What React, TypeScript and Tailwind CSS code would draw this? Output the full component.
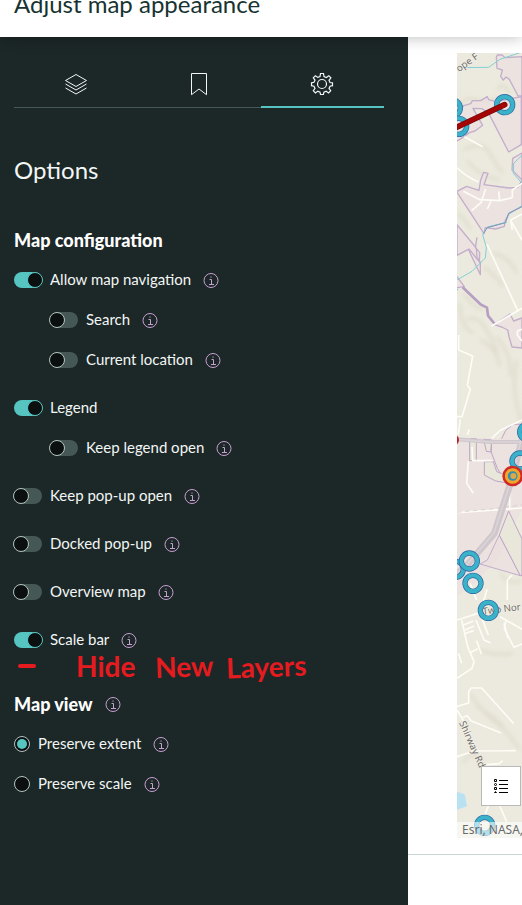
import { useState } from "react";
import type { ReactNode } from "react";

const switches = [
  { id: "navigation", label: "Allow map navigation", on: true, info: true, nested: false },
  { id: "search", label: "Search", on: false, info: true, nested: true },
  { id: "location", label: "Current location", on: false, info: true, nested: true },
  { id: "legend", label: "Legend", on: true, info: false, nested: false },
  { id: "legend-open", label: "Keep legend open", on: false, info: true, nested: true },
  { id: "popup-open", label: "Keep pop-up open", on: false, info: true, nested: false },
  { id: "popup-docked", label: "Docked pop-up", on: false, info: true, nested: false },
  { id: "overview", label: "Overview map", on: false, info: true, nested: false },
  { id: "scale-bar", label: "Scale bar", on: true, info: true, nested: false },
];

const views = [
  { id: "extent", label: "Preserve extent" },
  { id: "scale", label: "Preserve scale" },
];

// Blue rings on the map, in map units (three per pixel)
const points = [
  [157, 324],
  [176, 379],
  [314, 314],
  [383, 1296],
  [360, 1383],
  [166, 1708],
  [208, 1683],
  [219, 1750],
  [265, 1831],
  [254, 2476],
];

function LayersIcon() {
  return (
    <svg width="24" height="24" viewBox="0 0 24 24" fill="none" stroke="currentColor">
      <path d="M12 2.500 22.500 8.500 12 14.500 1.500 8.500z" />
      <path d="m1.500 12 10.500 6 10.500-6M1.500 16 12 22l10.500-6" />
    </svg>
  );
}

function BookmarkIcon() {
  return (
    <svg width="24" height="24" viewBox="0 0 24 24" fill="none" stroke="currentColor">
      <path d="M4.500 1.500h15v21.200L12 17l-7.500 5.700z" />
    </svg>
  );
}

function GearIcon() {
  return (
    <svg width="24" height="24" viewBox="0 0 24 24" fill="none" stroke="currentColor" strokeWidth="1.2">
      <circle cx="12" cy="12" r="4.500" />
      <path d="M10.500 1.500h3l.5 3 2.300 1 2.500-1.800 2.100 2.100L19 8.300l1 2.200 2.500.3v2.900l-2.500.5-1 2.200 1.700 2.300-2.100 2.200-2.500-1.700-2.200 1-.5 2.300h-2.900l-.5-2.300-2.200-1-2.400 1.700-2.100-2.200L5 16.400l-1-2.200-2.500-.5v-2.900l2.500-.5L5 8.100 3.300 5.800l2.100-2.100 2.400 1.700 2.200-.9z" />
    </svg>
  );
}

const tabs = [
  { label: "Layers", icon: LayersIcon },
  { label: "Bookmarks", icon: BookmarkIcon },
  { label: "Options", icon: GearIcon },
];

function InfoButton({ label }: { label: string }) {
  return (
    <button type="button" aria-label={`About ${label}`} className="ml-3 text-[#c9a0d2]">
      <svg width="16" height="16" viewBox="0 0 16 16" fill="none" stroke="currentColor">
        <circle cx="8" cy="8.500" r="7" />
        <path d="M6.500 7.500h2v5M6 12.500h5M8 4.500v1.200" />
      </svg>
    </button>
  );
}

function Row({ className = "", children }: { className?: string; children: ReactNode }) {
  return <div className={`flex h-6 items-center text-[15px] ${className}`}>{children}</div>;
}

function OptionsPanel() {
  const [tab, setTab] = useState("Options");

  return (
    <aside className="relative w-[408px] shrink-0 bg-[#1c2727] pt-6 pr-6 pl-[14px] text-[#f2f6f5]">
      <div role="tablist" className="grid grid-cols-3">
        {tabs.map((t) => (
          <button
            key={t.label}
            type="button"
            role="tab"
            aria-label={t.label}
            aria-selected={tab === t.label}
            onClick={() => setTab(t.label)}
            className={`flex h-[47px] items-center justify-center ${
              tab === t.label ? "border-b-2 border-[#56c5c1]" : "border-b border-[#455957]"
            }`}
          >
            <t.icon />
          </button>
        ))}
      </div>

      <h2 className="mt-[46px] text-2xl leading-8">Options</h2>

      <h3 className="mt-[42px] text-lg leading-6 font-black text-white">Map configuration</h3>
      {switches.map((s, i) => (
        <Row
          key={s.id}
          className={s.nested ? "mt-4 pl-9" : i === 0 ? "mt-4" : "mt-6"}
        >
          <input
            id={s.id}
            type="checkbox"
            role="switch"
            defaultChecked={s.on}
            className="relative h-4 w-7 appearance-none rounded-full bg-[#465856] before:absolute before:top-0 before:-left-px before:size-4 before:rounded-full before:border before:border-[#b4c4c2] before:bg-[#0b0f10] checked:bg-[#56c5c1] checked:before:left-[13px] checked:before:border-[#56c5c1]"
          />
          <label htmlFor={s.id} className="pb-0.5 pl-2 leading-6">
            {s.label}
          </label>
          {s.info && <InfoButton label={s.label} />}
        </Row>
      ))}

      <div className="mt-10 flex h-6 items-center">
        <h3 className="text-lg leading-6 font-black text-white">Map view</h3>
        <InfoButton label="Map view" />
      </div>
      {views.map((v, i) => (
        <Row key={v.id} className="mt-4">
          <input
            id={v.id}
            type="radio"
            name="view"
            defaultChecked={i === 0}
            className="size-4 appearance-none rounded-full border border-[#b4c4c2] bg-[#0b0f10] p-0.5 before:block before:size-full before:rounded-full checked:before:bg-[#56c5c1]"
          />
          <label htmlFor={v.id} className="pb-0.5 pl-2 leading-6">
            {v.label}
          </label>
          <InfoButton label={v.label} />
        </Row>
      ))}

      {/* Red pen note over the panel */}
      <div className="absolute top-[611px] left-[18px] flex h-9 items-center text-[28px] font-bold text-[#e51b1f]">
        <span className="mr-10 h-1 w-[18px] rounded-full bg-[#e51b1f]" />
        <span>Hide</span>
        <span className="ml-5 -rotate-2">New</span>
        <span className="ml-3 -rotate-2">Layers</span>
      </div>
    </aside>
  );
}

function MapDrawing() {
  return (
    <svg
      className="block h-[785px] w-full"
      viewBox="171 159 195 2355"
      preserveAspectRatio="xMinYMin slice"
      fill="none"
      strokeLinejoin="round"
      fontFamily='"Noto Sans", sans-serif'
    >
      <defs>
        <filter id="soft" x="-50%" y="-50%" width="200%" height="200%">
          <feGaussianBlur stdDeviation="6" />
        </filter>
      </defs>
      <rect x="171" y="159" width="195" height="2355" fill="#eceade" />

      {/* Hill shading */}
      <g filter="url(#soft)" stroke="#d6d3c2" strokeWidth="8" opacity="0.65">
        <path d="M171 320q30-35 60-20t60-10M190 450q60-30 80 10t40 60M200 480q40 50 100 60M290 270q20-30 40 10M171 640q30 20 40 50" />
        <path d="M280 760q50 10 70 60M250 800q40 30 60 60M190 880q30 40 60 50M180 910q0 70 40 90M200 960q30-20 60 30t30 70M240 1020q50 20 60 80M290 1010q50 60 40 120M350 1080q-20 100 20 200" />
        <path d="M300 1720q30 40 66 20M180 1740q20-50 60-30M240 1950q50 20 100 10M210 2080q30 50 70 80t80 90M230 2120q40 20 80 60M190 2290q20-50 60 0" />
      </g>

      {/* Township areas */}
      <g fill="#ecdfdf" fillOpacity="0.75" stroke="#c3aecb" strokeWidth="4">
        <path d="M292 165h14l10 8 50-3v118h-12l-26-50-10-7-8 9-8-10 5-20-16-5-2-33z" />
        <path d="M171 330l15-6 5-7 21-6 5-9h25l20-12 4 9 22 6 76-15v144l-38 22-61-118-20-12-26-1 29 51-23 17-15 4-27 19-32 18-6-6z" />
        <path d="M171 574l29-15 37 12 5-31 9-23 13 3-12 34 75 10 27-2 12-22-30-30 2-35 28-16v160l-38 20-12 22-3 18-26 8-31-4-4 18-81-124z" />
        <path d="M171 674l58 70 2 28 10 15v37l-36-76-34 18z" />
        <path d="M206 746l36 44M231 712l-5 30 13 15-1 30" />
        <path d="M171 830l22 30-22 3M283 974l47-32 11 21 25-9v90l-30-3-9-31-4-20-18-9-22-7z" />
        <path d="M171 1313l134 3 12-26 22-18 27-8v266l-38 70-32 75-67 72-60 45z" stroke="none" />
        <path d="M298 1605l-36 75-22 12 121 35z" strokeWidth="3" />
      </g>
      <path d="M188 862l55 52 18 9 3 24 20 25" stroke="#b79fc3" strokeWidth="8" />
      <path d="M298 1605l28-72 40 84v110l-5 0z" fill="#e9e7d9" stroke="#bda5c8" strokeWidth="3" />
      <g fill="#e9e7d9" stroke="#bda5c8" strokeWidth="3">
        <path d="M209 1316h20v66h-20zM251 1318l24 2-2 36-14-2zM253 1385h27l10 30 40 15-13 18-30-5-34-18z" />
      </g>
      <path d="M305 1316l12-25 22-18h27M275 1320l-2 35 19 50 9 15" stroke="#bda5c8" strokeWidth="3" />

      {/* Streams */}
      <g stroke="#82cfd4" strokeWidth="3">
        <path d="M171 203l95-1 34-24 66-22M366 466l-25 24-1 30 26 30M366 617l-40 26-10 25-57 15M320 667l-58 14-14 23 11 38-3 32-40 40-44 25M171 872l3-6" />
      </g>
      <path d="M366 620l-40 20-10 28-54 15-12 18" stroke="#8596bb" strokeWidth="3" />

      {/* Local roads */}
      <g stroke="#fdfcf6" strokeWidth="5">
        <path d="M193 410l55 30M171 503q30 30 65 43M190 574l50 25 60 3 37-9M215 632l28-24 14-41M262 627l12-26M296 574l3 28M337 593V570l29-20M337 690l-5-30 34-18" />
        <path d="M261 733l92 198M331 660l35 60M275 978l91-53M176 1005v45l42 18-16 88 9 12-25 82h-15M366 988l-14 5v12l14 18M181 1258l-6 45M208 1288l-6 16M275 1315l27-25 64-30" />
        <path d="M216 1340l2 42h60M205 1385l-5 65 20 30M171 1538l195-14M329 1450v80M210 1750l20 50M171 1860l70-22 20-70M190 1875l30-12M195 1890l28-12M240 1840l25 65M300 1850l66 38M312 1870l12 45M322 1740l14-15M322 1740v60" />
        <path d="M185 1860l18 80 19 45-6 20-45 30M196 1900l25-8M175 1960l10 30M228 1860l24 60 20 9M230 1922l14 40M210 1958l24-12M318 1860l-5 26 29 56 24-10M171 2119l35-10v-36l8-9h31l96 107M188 2152l14-5 11 15 90 37M171 2130l25 42M171 2270l52-17 125-1M260 2294l38-3 10-9M265 2418l-12 30M298 2415l22 50" />
      </g>

      {/* Highway */}
      <g stroke="#cfc7cb">
        <path d="M171 1318l100 8h95" strokeWidth="12" />
        <path d="M366 1320l-30 115-53 165-80 93-32 28" strokeWidth="20" />
      </g>
      <path d="M171 1318l100 8h95M363 1320l-28 115-53 164-78 91-30 27" stroke="#dad4d8" strokeWidth="5" />
      <path d="M171 1537l100-10 95-12" stroke="#cfc5ca" strokeWidth="2" strokeDasharray="14 10" />

      <path d="M171 2375l23 8 7 36-30 10z" fill="#b8e1f2" />

      <g fill="#6e6c6a" stroke="#f4f2e8" strokeWidth="4" paintOrder="stroke" fontSize="29">
        <text transform="translate(177 217) rotate(-36)">ope F</text>
        <text transform="translate(249 1844) rotate(-7)">Two Nor</text>
        <text transform="translate(177 2168) rotate(66)">Shirway Rd</text>
      </g>

      {points.map(([x, y]) => (
        <g key={`${x}-${y}`}>
          <circle cx={x} cy={y} r="24" stroke="#2f68a8" strokeWidth="16" />
          <circle cx={x} cy={y} r="24" stroke="#3ab2c7" strokeWidth="12" />
        </g>
      ))}

      <circle cx="160" cy="1320" r="17" fill="#b8232b" />
      <path d="M150 391l164-77" stroke="#6f0c0c" strokeWidth="17" strokeLinecap="round" />
      <path d="M150 391l164-77" stroke="#a60505" strokeWidth="13" strokeLinecap="round" />
      <circle cx="338" cy="1428" r="31" fill="#cf2a25" />
      <circle cx="338" cy="1428" r="19" fill="#328db3" stroke="#f0a62c" strokeWidth="9" />
      <circle cx="340" cy="1428" r="9" fill="#d9aa4b" />
    </svg>
  );
}

function LegendIcon() {
  return (
    <svg width="16" height="16" viewBox="0 0 16 16" fill="none" stroke="#000000">
      <path d="M6 2.500h9M6 6.500h9M6 10.500h9M6 14.500h9" />
      <path d="M1.500 1.500h2v2h-2zM1.500 9.500h2v2h-2zM1.500 14.500h2l-1-1z" />
      <circle cx="2.500" cy="6.500" r="1" />
    </svg>
  );
}

export default function App() {
  return (
    <div className="flex min-h-screen flex-col overflow-hidden bg-white font-['Lato',sans-serif]">
      <header className="relative z-10 h-[37px] bg-white shadow-[0_0_16px_rgba(0,0,0,0.28)]">
        <h1 className="-mt-3 pl-[14px] text-2xl leading-8 whitespace-nowrap text-[#173331]">
          Adjust map appearance
        </h1>
      </header>

      <div className="flex flex-1">
        <OptionsPanel />
        <main className="min-w-0 flex-1">
          <div className="border-b border-[#c8d7d4] pt-4 pb-4 pl-[49px]">
            <div className="relative overflow-hidden">
              <MapDrawing />
              <button
                type="button"
                aria-label="Legend"
                className="absolute bottom-8 left-6 flex size-10 items-center justify-center border border-[#b9b9b9] bg-white"
              >
                <LegendIcon />
              </button>
              <div className="absolute inset-x-0 bottom-0 h-4 bg-white/60 pl-[5px] font-['Noto_Sans',sans-serif] text-xs leading-4 whitespace-nowrap text-[#6a6a6a]">
                Esri, NASA,
              </div>
            </div>
          </div>
        </main>
      </div>
    </div>
  );
}
